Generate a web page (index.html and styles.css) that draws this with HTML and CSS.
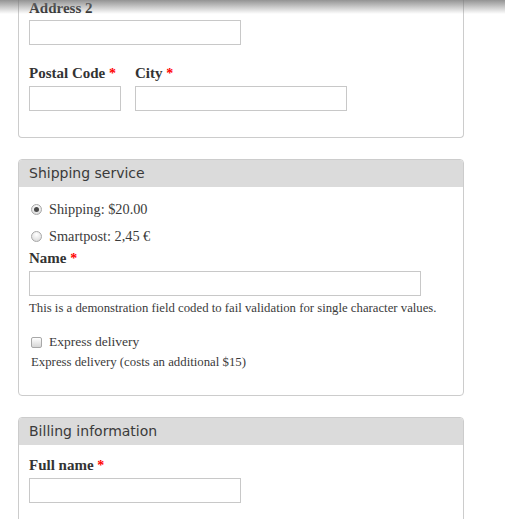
FILE: index.html
```html
<!DOCTYPE html>
<html>
<head>
<meta charset="utf-8">
<link rel="stylesheet" href="styles.css">
</head>
<body>
<div class="top-shadow"></div>
<div class="page">
  <fieldset class="group group-continued">
    <div class="group-body">
      <div class="form-item">
        <label class="field-label">Address 2</label>
        <input class="text-input w-md" type="text">
      </div>
      <div class="form-row">
        <div class="form-col">
          <label class="field-label">Postal Code <span class="req">*</span></label>
          <input class="text-input w-sm" type="text">
        </div>
        <div class="form-col">
          <label class="field-label">City <span class="req">*</span></label>
          <input class="text-input w-md" type="text">
        </div>
      </div>
    </div>
  </fieldset>

  <fieldset class="group">
    <div class="group-title">Shipping service</div>
    <div class="group-body body-shipping">
      <div class="choices">
        <label class="choice"><span class="radio checked"></span>Shipping: $20.00</label>
        <label class="choice"><span class="radio"></span>Smartpost: 2,45 €</label>
      </div>
      <div class="form-item">
        <label class="field-label">Name <span class="req">*</span></label>
        <input class="text-input w-lg" type="text">
        <div class="description">This is a demonstration field coded to fail validation for single character values.</div>
      </div>
      <div class="check-item">
        <label class="choice"><span class="checkbox"></span>Express delivery</label>
        <div class="check-desc">Express delivery (costs an additional $15)</div>
      </div>
    </div>
  </fieldset>

  <fieldset class="group">
    <div class="group-title">Billing information</div>
    <div class="group-body body-billing">
      <div class="form-item">
        <label class="field-label">Full name <span class="req">*</span></label>
        <input class="text-input w-md" type="text">
      </div>
    </div>
  </fieldset>
</div>
</body>
</html>
```

FILE: styles.css
```css
html, body {
  margin: 0;
  padding: 0;
  background: #fff;
}
body {
  font-family: "Liberation Serif", "DejaVu Serif", serif;
  color: #3b3b3b;
  overflow: hidden;
}
.top-shadow {
  position: absolute;
  left: 0;
  top: 0;
  width: 100%;
  height: 14px;
  background: linear-gradient(to bottom, rgba(120,120,120,0.8), rgba(255,255,255,0));
  pointer-events: none;
  z-index: 5;
}
.page {
  padding-left: 18px;
  width: 446px;
  margin-top: -1px;
}
.group {
  margin: 0 0 21px 0;
  padding: 0;
  border: 1px solid #cccccc;
  border-radius: 4px;
  min-width: 0;
}
.group-continued {
  border-top: none;
  border-top-left-radius: 0;
  border-top-right-radius: 0;
}
.group-title {
  background: #dbdbdb;
  height: 27px;
  line-height: 27px;
  padding-left: 10px;
  font-family: "DejaVu Sans", Verdana, sans-serif;
  font-size: 14px;
  color: #3a3a3a;
  border-radius: 3px 3px 0 0;
}
.group-body {
  padding: 0 10px 26px 10px;
}
.body-shipping {
  padding-bottom: 24px;
}
.body-billing {
  padding-top: 11px;
}
.form-row {
  display: flex;
  gap: 14px;
  margin-top: 19px;
}
.form-item,
.form-col {
  display: flex;
  flex-direction: column;
  align-items: flex-start;
}
.form-item + .form-item {
  margin-top: 19px;
}
.field-label {
  display: block;
  font-weight: bold;
  font-size: 15px;
  line-height: 18px;
  margin-bottom: 3px;
  color: #333;
}
.req {
  color: #ff0000;
  font-size: 14px;
}
.text-input {
  box-sizing: border-box;
  height: 25px;
  border: 1px solid #c8c8c8;
  margin: 0;
  padding: 2px 4px;
  background: #fff;
}
.w-sm { width: 92px; }
.w-md { width: 212px; }
.w-lg { width: 392px; }
.choices {
  display: flex;
  flex-direction: column;
  padding-top: 13px;
}
.choice {
  display: flex;
  align-items: center;
  font-size: 14.3px;
  color: #3b3b3b;
  height: 18px;
}
.choices .choice + .choice {
  margin-top: 9px;
}
.choices + .form-item {
  margin-top: 4px;
}
.radio {
  box-sizing: border-box;
  width: 11px;
  height: 11px;
  border-radius: 50%;
  border: 1px solid #a8a8a8;
  background: radial-gradient(circle at 50% 30%, #ffffff 0%, #e6e6e6 60%, #d0d0d0 100%);
  margin: 0 7px 0 2px;
  position: relative;
  flex: none;
}
.radio.checked::after {
  content: "";
  position: absolute;
  left: 2px;
  top: 2px;
  width: 5px;
  height: 5px;
  border-radius: 50%;
  background: #4a4a4a;
}
.checkbox {
  box-sizing: border-box;
  width: 11px;
  height: 11px;
  border-radius: 2px;
  border: 1px solid #a8a8a8;
  background: linear-gradient(to bottom, #ffffff, #d6d6d6);
  margin: 0 7px 0 2px;
  flex: none;
}
.check-item .choice {
  font-size: 13.5px;
}
.description {
  font-size: 12.75px;
  line-height: 18px;
  margin-top: 3px;
  color: #3b3b3b;
}
.check-item {
  margin-top: 16px;
}
.check-desc {
  font-size: 12.8px;
  line-height: 18px;
  margin-top: 2px;
  padding-left: 2px;
}
```
